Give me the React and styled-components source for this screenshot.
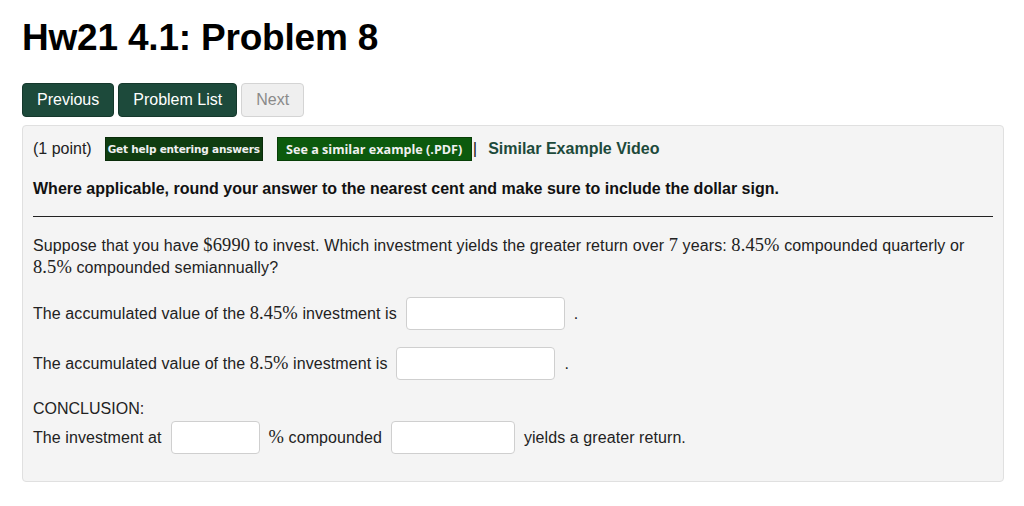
import React from 'react'
import styled, { createGlobalStyle } from 'styled-components'

const Global = createGlobalStyle`
  body {
    margin: 0;
    background: #fff;
    font-family: "Liberation Sans", Arial, sans-serif;
    color: #222;
  }
`

const Page = styled.div`
  padding: 0 20px 0 22px;
`

const Title = styled.h1`
  margin: 0;
  padding-top: 18px;
  font-size: 37px;
  line-height: 40px;
  letter-spacing: -0.2px;
  font-weight: 700;
  color: #000;
`

const NavRow = styled.div`
  display: flex;
  gap: 4px;
  margin-top: 25px;
`

const NavButton = styled.button`
  height: 34px;
  padding: 0 14px;
  font-family: "Liberation Sans", Arial, sans-serif;
  font-size: 16px;
  border-radius: 4px;
  border: 1px solid ${p => (p.disabled ? '#d4d4d4' : '#15382c')};
  background: ${p => (p.disabled ? '#efefef' : '#1d4a3b')};
  color: ${p => (p.disabled ? '#8a8a8a' : '#fff')};
`

const Panel = styled.div`
  margin-top: 8px;
  width: 982px;
  box-sizing: border-box;
  height: 357px;
  background: #f4f4f4;
  border: 1px solid #e0e0e0;
  border-radius: 4px;
  padding: 11px 10px 0 10px;
  font-size: 16px;
`

const HeadRow = styled.div`
  display: flex;
  align-items: center;
  height: 24px;
`

const Points = styled.span`
  margin-right: 13px;
`

const HelpButton = styled.span`
  display: inline-flex;
  align-items: center;
  justify-content: center;
  height: 24px;
  box-sizing: border-box;
  width: ${p => p.w}px;
  background: ${p => p.bg};
  border: 1px solid ${p => p.edge};
  color: #f0f0f0;
  font-family: ${p => p.font};
  font-size: ${p => p.size}px;
  font-weight: 700;
  margin-right: ${p => p.mr}px;
  letter-spacing: ${p => p.ls || 0}px;
  white-space: nowrap;
`

const Sep = styled.span`
  font-size: 17px;
  color: #222;
  margin-right: 11px;
`

const VideoLink = styled.span`
  font-weight: 700;
  color: #1d4a3b;
`

const Notice = styled.div`
  margin-top: 18px;
  line-height: 20px;
  font-weight: 700;
  color: #111;
`

const Rule = styled.div`
  margin-top: 17px;
  height: 1px;
  background: #222;
`

const Para = styled.p`
  margin: 18px 0 0;
  line-height: 22px;
  padding-right: 10px;
  letter-spacing: 0.1px;
`

const M = styled.span`
  font-family: "Liberation Serif", "Times New Roman", serif;
  font-size: 18.5px;
  line-height: 1;
`

const AnswerRow = styled.div`
  display: flex;
  align-items: center;
  margin-top: ${p => p.mt}px;
  height: 33px;
  white-space: pre;
  letter-spacing: 0.08px;
`

const Box = styled.span`
  display: inline-block;
  width: ${p => p.w}px;
  height: 33px;
  box-sizing: border-box;
  background: #fff;
  border: 1px solid #cfcfcf;
  border-radius: 4px;
  margin: 0 9px;
`

const Label = styled.div`
  margin-top: 19px;
  line-height: 20px;
`

export default function App() {
  return (
    <Page>
      <Global />
      <Title>Hw21 4.1: Problem 8</Title>
      <NavRow>
        <NavButton>Previous</NavButton>
        <NavButton>Problem List</NavButton>
        <NavButton disabled>Next</NavButton>
      </NavRow>
      <Panel>
        <HeadRow>
          <Points>(1 point)</Points>
          <HelpButton w={158} bg="#0f3d10" edge="#0a2c0a" font={'"DejaVu Sans", sans-serif'} size={10.5} mr={14} ls={-0.2}>
            Get help entering answers
          </HelpButton>
          <HelpButton w={195} bg="#0c5a0d" edge="#083f08" font={'"Open Sans", sans-serif'} size={12.6} mr={1}>
            See a similar example (.PDF)
          </HelpButton>
          <Sep>|</Sep>
          <VideoLink>Similar Example Video</VideoLink>
        </HeadRow>
        <Notice>
          Where applicable, round your answer to the nearest cent and make sure to include the dollar sign.
        </Notice>
        <Rule />
        <Para>
          Suppose that you have <M>$6990</M> to invest. Which investment yields the greater return over <M>7</M> years: <M>8.45%</M> compounded quarterly or <M>8.5%</M> compounded semiannually?
        </Para>
        <AnswerRow mt={18}>
          The accumulated value of the <M>8.45%</M> investment is
          <Box w={159} />.
        </AnswerRow>
        <AnswerRow mt={17}>
          The accumulated value of the <M>8.5%</M> investment is
          <Box w={159} />.
        </AnswerRow>
        <Label>CONCLUSION:</Label>
        <AnswerRow mt={2}>
          The investment at
          <Box w={89} />
          <M>%</M> compounded
          <Box w={124} />
          yields a greater return.
        </AnswerRow>
      </Panel>
    </Page>
  )
}
